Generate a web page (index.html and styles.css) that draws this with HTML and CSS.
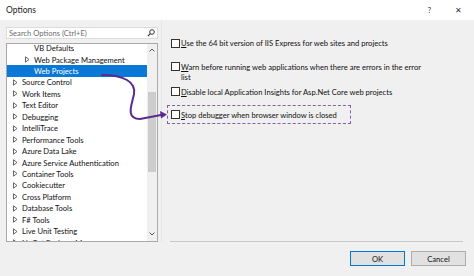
FILE: index.html
```html
<!DOCTYPE html>
<html>
<head>
<meta charset="utf-8">
<link rel="stylesheet" href="styles.css">
</head>
<body>
<div class="window">
  <div class="titlebar">
    <span class="title">Options</span>
    <span class="tb-btns"><span class="help">?</span><span class="close">✕</span></span>
  </div>
  <div class="main">
    <div class="left">
      <div class="search">
        <span class="ph">Search Options (Ctrl+E)</span>
        <svg class="mag" width="8" height="8" viewBox="0 0 8 8"><circle cx="5" cy="3" r="2.3" fill="none" stroke="#333" stroke-width="1"/><line x1="3.3" y1="4.7" x2="0.8" y2="7.2" stroke="#333" stroke-width="1.2"/></svg>
      </div>
      <div class="tree">
        <div class="items">
          <div class="item child"><span class="tri"></span>VB Defaults</div>
          <div class="item child"><span class="tri"><svg width="5" height="7" viewBox="0 0 5 7"><polygon points="0.5,0.8 4,3.5 0.5,6.2" fill="none" stroke="#555" stroke-width="0.9"/></svg></span>Web Package Management</div>
          <div class="item child selected"><span class="tri"></span>Web Projects</div>
          <div class="item"><span class="tri"><svg width="5" height="7" viewBox="0 0 5 7"><polygon points="0.5,0.8 4,3.5 0.5,6.2" fill="none" stroke="#555" stroke-width="0.9"/></svg></span>Source Control</div>
          <div class="item"><span class="tri"><svg width="5" height="7" viewBox="0 0 5 7"><polygon points="0.5,0.8 4,3.5 0.5,6.2" fill="none" stroke="#555" stroke-width="0.9"/></svg></span>Work Items</div>
          <div class="item"><span class="tri"><svg width="5" height="7" viewBox="0 0 5 7"><polygon points="0.5,0.8 4,3.5 0.5,6.2" fill="none" stroke="#555" stroke-width="0.9"/></svg></span>Text Editor</div>
          <div class="item"><span class="tri"><svg width="5" height="7" viewBox="0 0 5 7"><polygon points="0.5,0.8 4,3.5 0.5,6.2" fill="none" stroke="#555" stroke-width="0.9"/></svg></span>Debugging</div>
          <div class="item"><span class="tri"><svg width="5" height="7" viewBox="0 0 5 7"><polygon points="0.5,0.8 4,3.5 0.5,6.2" fill="none" stroke="#555" stroke-width="0.9"/></svg></span>IntelliTrace</div>
          <div class="item"><span class="tri"><svg width="5" height="7" viewBox="0 0 5 7"><polygon points="0.5,0.8 4,3.5 0.5,6.2" fill="none" stroke="#555" stroke-width="0.9"/></svg></span>Performance Tools</div>
          <div class="item"><span class="tri"><svg width="5" height="7" viewBox="0 0 5 7"><polygon points="0.5,0.8 4,3.5 0.5,6.2" fill="none" stroke="#555" stroke-width="0.9"/></svg></span>Azure Data Lake</div>
          <div class="item"><span class="tri"><svg width="5" height="7" viewBox="0 0 5 7"><polygon points="0.5,0.8 4,3.5 0.5,6.2" fill="none" stroke="#555" stroke-width="0.9"/></svg></span>Azure Service Authentication</div>
          <div class="item"><span class="tri"><svg width="5" height="7" viewBox="0 0 5 7"><polygon points="0.5,0.8 4,3.5 0.5,6.2" fill="none" stroke="#555" stroke-width="0.9"/></svg></span>Container Tools</div>
          <div class="item"><span class="tri"><svg width="5" height="7" viewBox="0 0 5 7"><polygon points="0.5,0.8 4,3.5 0.5,6.2" fill="none" stroke="#555" stroke-width="0.9"/></svg></span>Cookiecutter</div>
          <div class="item"><span class="tri"><svg width="5" height="7" viewBox="0 0 5 7"><polygon points="0.5,0.8 4,3.5 0.5,6.2" fill="none" stroke="#555" stroke-width="0.9"/></svg></span>Cross Platform</div>
          <div class="item"><span class="tri"><svg width="5" height="7" viewBox="0 0 5 7"><polygon points="0.5,0.8 4,3.5 0.5,6.2" fill="none" stroke="#555" stroke-width="0.9"/></svg></span>Database Tools</div>
          <div class="item"><span class="tri"><svg width="5" height="7" viewBox="0 0 5 7"><polygon points="0.5,0.8 4,3.5 0.5,6.2" fill="none" stroke="#555" stroke-width="0.9"/></svg></span>F# Tools</div>
          <div class="item"><span class="tri"><svg width="5" height="7" viewBox="0 0 5 7"><polygon points="0.5,0.8 4,3.5 0.5,6.2" fill="none" stroke="#555" stroke-width="0.9"/></svg></span>Live Unit Testing</div>
          <div class="item"><span class="tri"><svg width="5" height="7" viewBox="0 0 5 7"><polygon points="0.5,0.8 4,3.5 0.5,6.2" fill="none" stroke="#555" stroke-width="0.9"/></svg></span>NuGet Package Manager</div>
        </div>
        <div class="scrollbar">
          <svg class="arrow-up" width="6" height="4" viewBox="0 0 6 4"><polyline points="0.5,3.5 3,1 5.5,3.5" fill="none" stroke="#555" stroke-width="1"/></svg>
          <div class="track"><div class="thumb"></div></div>
          <svg class="arrow-down" width="6" height="4" viewBox="0 0 6 4"><polyline points="0.5,0.5 3,3 5.5,0.5" fill="none" stroke="#555" stroke-width="1"/></svg>
        </div>
      </div>
    </div>
    <div class="right">
      <div class="options">
        <div class="opt o1"><span class="cb"></span><span class="lbl"><u>U</u>se the 64 bit version of IIS Express for web sites and projects</span></div>
        <div class="opt o2"><span class="cb"></span><span class="lbl"><u>W</u>arn before running web applications when there are errors in the error<br>list</span></div>
        <div class="opt o3"><span class="cb"></span><span class="lbl"><u>D</u>isable local Application Insights for Asp.Net Core web projects</span></div>
        <div class="opt o4 focus"><span class="cb"></span><span class="lbl"><u>S</u>top debugger when browser window is closed</span></div>
      </div>
      <div class="sep"></div>
    </div>
  </div>
  <div class="footer">
    <button class="btn ok">OK</button>
    <button class="btn">Cancel</button>
  </div>
  <svg class="annot" width="474" height="276" viewBox="0 0 474 276">
    <path d="M102,75 C124,75 136,82 134,94 C132,104 125,119 140,119 L161,115" fill="none" stroke="#5a2a8c" stroke-width="2" stroke-linecap="round"/>
    <polygon points="160,111 167,114.5 161,118.5" fill="#5a2a8c"/>
  </svg>
</div>
</body>
</html>
```

FILE: styles.css
```css
html, body {
  margin: 0;
  padding: 0;
}
body {
  background: #f0f0f0;
}
.window {
  position: relative;
  width: 474px;
  height: 276px;
  background: #f0f0f0;
  font-family: Lato, "Noto Sans", sans-serif;
  font-size: 7.6px;
  color: #111;
  overflow: hidden;
  display: flex;
  flex-direction: column;
}
.titlebar {
  height: 20px;
  flex: none;
  background: #ffffff;
  display: flex;
  align-items: center;
  justify-content: space-between;
  padding: 0 12px 0 6px;
}
.title {
  font-size: 8.5px;
  color: #222;
}
.tb-btns {
  display: flex;
  gap: 24px;
  align-items: center;
  color: #333;
}
.help {
  font-size: 7.5px;
}
.close {
  font-size: 8px;
}
.main {
  height: 222px;
  flex: none;
  display: flex;
  padding-left: 6px;
}
.left {
  width: 152px;
  flex: none;
  display: flex;
  flex-direction: column;
  padding-top: 7px;
}
.search {
  height: 12px;
  box-sizing: border-box;
  background: #fff;
  border: 1px solid #dcdcdc;
  display: flex;
  align-items: center;
  justify-content: space-between;
  padding: 0 2px 0 2px;
}
.ph {
  color: #6d6d6d;
}
.tree {
  margin-top: 4px;
  height: 199px;
  box-sizing: border-box;
  border: 1px solid #a9a9a9;
  background: #fff;
  display: flex;
  overflow: hidden;
}
.items {
  flex: 1;
  margin-top: -1.6px;
  overflow: hidden;
}
.item {
  height: 11.44px;
  display: flex;
  align-items: center;
  padding-left: 6px;
  white-space: nowrap;
}
.item.child {
  padding-left: 18px;
}
.tri {
  width: 9px;
  flex: none;
  display: flex;
  align-items: center;
}
.tri svg {
  display: block;
}
.item.selected {
  background: #0a78d7;
  color: #fff;
}
.scrollbar {
  width: 10px;
  flex: none;
  background: #f0f0f0;
  display: flex;
  flex-direction: column;
  align-items: center;
}
.arrow-up {
  margin-top: 4px;
  flex: none;
}
.track {
  flex: 1;
  width: 100%;
  padding-top: 40px;
  box-sizing: border-box;
}
.thumb {
  width: 8px;
  margin: 0 auto;
  height: 80px;
  background: #cdcdcd;
}
.arrow-down {
  margin-bottom: 5px;
  flex: none;
}
.right {
  flex: 1;
  display: flex;
  flex-direction: column;
  border-left: 1px solid #e6e6e6;
  margin-left: 3px;
}
.options {
  padding-top: 18px;
  padding-left: 9px;
  display: flex;
  flex-direction: column;
  align-items: flex-start;
}
.opt {
  display: flex;
  align-items: flex-start;
  line-height: 10.5px;
  white-space: nowrap;
}
.cb {
  width: 9px;
  height: 9px;
  box-sizing: border-box;
  border: 1px solid #333;
  background: #fff;
  margin-top: 0.5px;
  margin-right: 1px;
  flex: none;
}
.o2 { margin-top: 13px; }
.o3 { margin-top: 4px; }
.o4 {
  margin-top: 7.5px;
  margin-left: -4px;
  padding: 4px 13px 3px 3px;
  border: 1px dashed #8a5cb0;
}
.sep {
  margin-top: auto;
  margin-left: 8px;
  margin-right: 11px;
  height: 1px;
  background: #c8c8c8;
}
.footer {
  flex: 1;
  display: flex;
  justify-content: flex-end;
  align-items: flex-start;
  gap: 6px;
  padding: 9px 8px 0 0;
}
.btn {
  width: 55px;
  height: 15px;
  box-sizing: border-box;
  background: #e1e1e1;
  border: 1px solid #adadad;
  font-family: Lato, "Noto Sans", sans-serif;
  font-size: 7.6px;
  color: #111;
  padding: 0;
  margin: 0;
}
.btn.ok {
  border-color: #0078d7;
}
.annot {
  position: absolute;
  left: 0;
  top: 0;
  pointer-events: none;
}
```
